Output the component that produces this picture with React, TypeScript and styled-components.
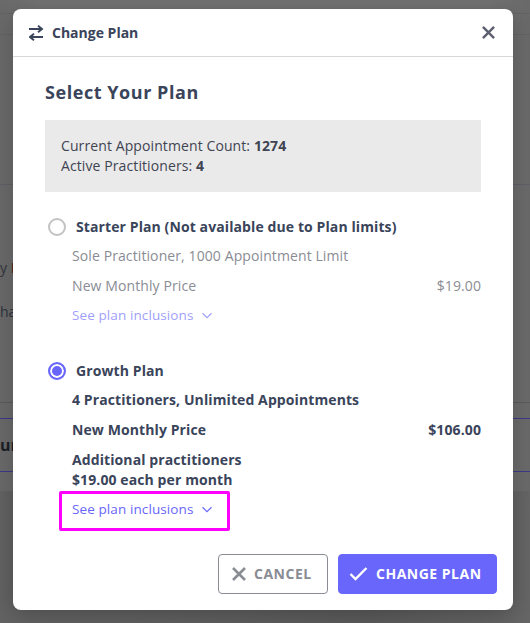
import styled, { createGlobalStyle } from "styled-components";

const GlobalStyle = createGlobalStyle`
  html, body {
    margin: 0;
    padding: 0;
    background: #707070;
  }
  * {
    box-sizing: border-box;
  }
  body {
    font-family: "Open Sans", "Liberation Sans", sans-serif;
  }
`;

const Page = styled.div`
  position: relative;
  width: 530px;
  height: 623px;
  overflow: hidden;
  background: linear-gradient(90deg, #6a6a6a 0, #757575 8%, #757575 92%, #6a6a6a 100%);
`;

/* what shows behind the overlay */
const Behind = styled.div`
  display: flex;
  flex-direction: column;
  height: 100%;
`;

const Band = styled.div<{ $h: number; $line?: string }>`
  height: ${(p) => p.$h}px;
  flex: none;
  border-bottom: 1px solid ${(p) => p.$line ?? "transparent"};
  display: flex;
  align-items: center;
`;

const Dim = styled.div`
  flex: 1;
  background: linear-gradient(90deg, #636363 0, #606060 40%, #5c5c5c 70%, #666 100%);
`;

const BehindText = styled.span<{ $color: string; $size?: number; $weight?: number }>`
  font-size: ${(p) => p.$size ?? 14}px;
  font-weight: ${(p) => p.$weight ?? 400};
  color: ${(p) => p.$color};
  white-space: pre;
`;

const Modal = styled.div`
  position: absolute;
  top: 9px;
  left: 13px;
  width: 500px;
  height: 601px;
  background: #fff;
  border-radius: 8px;
  box-shadow: 0 4px 24px rgba(0, 0, 0, 0.25);
  display: flex;
  flex-direction: column;
`;

const Header = styled.div`
  height: 48px;
  flex: none;
  border-bottom: 1px solid #d8d8d8;
  display: flex;
  align-items: center;
  padding: 0 18px 0 16px;
  gap: 7px;
  color: #3a445a;
`;

const HeaderTitle = styled.div`
  flex: 1;
  font-size: 14px;
  font-weight: 700;
`;

const CloseButton = styled.button`
  border: 0;
  background: none;
  padding: 0;
  display: flex;
  color: #5c5f6e;
`;

const Body = styled.div`
  flex: 1;
  padding: 23px 32px 0;
  color: #3a445a;
`;

const Title = styled.h2`
  margin: 0 0 16px;
  height: 24px;
  line-height: 24px;
  font-size: 18px;
  font-weight: 700;
  letter-spacing: 0.55px;
`;

const InfoBox = styled.div`
  background: #eaeaea;
  padding: 16px;
  font-size: 14px;
  line-height: 20px;
  letter-spacing: 0.1px;
  color: #3f4452;

  b {
    font-weight: 700;
  }
`;

const Plan = styled.div<{ $disabled?: boolean }>`
  margin-top: ${(p) => (p.$disabled ? 24 : 35)}px;
  display: flex;
  flex-direction: column;
  color: ${(p) => (p.$disabled ? "#8a8c94" : "#3a445a")};
  font-weight: ${(p) => (p.$disabled ? 400 : 700)};
  font-size: 14px;
  letter-spacing: 0.1px;
`;

const PlanHead = styled.div`
  display: flex;
  align-items: center;
  height: 20px;
  margin-left: 3px;
  gap: 10px;
  font-size: 14px;
  font-weight: 700;
  color: #3a445a;
`;

const Radio = styled.span<{ $checked?: boolean }>`
  width: 18px;
  height: 18px;
  margin-top: 2px;
  border-radius: 50%;
  flex: none;
  border: 2px solid ${(p) => (p.$checked ? "#6966fb" : "#c2c2c2")};
  background: ${(p) => (p.$checked ? "#6966fb" : "#fff")};
  box-shadow: ${(p) => (p.$checked ? "inset 0 0 0 2px #fff" : "none")};
`;

const Line = styled.div`
  margin: 10px 0 0 27px;
  line-height: 20px;
  display: flex;
  justify-content: space-between;
`;

const Extra = styled.div`
  margin: 10px 0 0 27px;
  line-height: 20px;
`;

const Inclusions = styled.a<{ $muted?: boolean; $marked?: boolean }>`
  position: relative;
  display: flex;
  align-items: center;
  align-self: flex-start;
  gap: 9px;
  height: 20px;
  margin: 9px 0 0 27px;
  font-size: 13.5px;
  font-weight: 400;
  color: ${(p) => (p.$muted ? "#a09ffc" : "#6966fb")};

  ${(p) =>
    p.$marked &&
    `&::after {
      content: "";
      position: absolute;
      top: -8px;
      bottom: -12px;
      left: -13px;
      right: -18px;
      border: 3px solid #ff00ff;
      border-radius: 2px;
    }`}
`;

const Footer = styled.div`
  display: flex;
  justify-content: flex-end;
  gap: 10px;
  padding: 0 16px 16px;
`;

const Button = styled.button<{ $primary?: boolean }>`
  height: 40px;
  width: ${(p) => (p.$primary ? 159 : 110)}px;
  padding: 0 0 1px ${(p) => (p.$primary ? 10 : 13)}px;
  border-radius: 4px;
  border: 1px solid ${(p) => (p.$primary ? "#6966fb" : "#8a8c94")};
  background: ${(p) => (p.$primary ? "#6966fb" : "#fff")};
  color: ${(p) => (p.$primary ? "#fff" : "#8a8c94")};
  font-family: inherit;
  font-size: 14px;
  font-weight: 700;
  letter-spacing: 0.5px;
  display: flex;
  align-items: center;
  gap: 8px;
`;

const Chevron = () => (
  <svg width="10" height="7" viewBox="0 0 10 7" fill="none" stroke="currentColor" strokeWidth="1.2">
    <path d="M0.5 1.25 L5 5.75 L9.5 1.25" />
  </svg>
);

const Cross = ({ size }: { size: number }) => (
  <svg width={size} height={size} viewBox="0 0 14 14" fill="none" stroke="currentColor" strokeWidth="2.6">
    <path d="M1 1 L13 13 M13 1 L1 13" />
  </svg>
);

const SwapIcon = () => (
  <svg width="16" height="16" viewBox="0 0 16 16" fill="none" stroke="currentColor" strokeWidth="1.9">
    <path d="M0 4 H13.5 M9 0.7 L13 4 L9 7.3" />
    <path d="M14 12 H1 M5 8.7 L1 12 L5 15.3" />
  </svg>
);

const Check = () => (
  <svg width="19" height="15" viewBox="0 0 19 15" fill="none" stroke="currentColor" strokeWidth="2.4">
    <path d="M1.5 8 L6.5 13 L17.5 2" />
  </svg>
);

export default function App() {
  return (
    <Page>
      <GlobalStyle />
      <Behind>
        <Band $h={14} $line="#656565" />
        <Band $h={21} $line="#656565" />
        <Band $h={150} $line="#5f6368" />
        <Band $h={73} />
        <Band $h={20}>
          <BehindText $color="#33353d">y </BehindText>
          <BehindText $color="#4a2418">I</BehindText>
        </Band>
        <Band $h={24} />
        <Band $h={20}>
          <BehindText $color="#2f3440">ha</BehindText>
        </Band>
        <Band $h={81} $line="#5c5c5c" />
        <Band $h={16} $line="#3d3a8c" />
        <Band $h={53} $line="#3d3a8c">
          <BehindText $color="#1d1f28" $size={16} $weight={700}>
            ur
          </BehindText>
        </Band>
        <Band $h={19} />
        <Dim />
      </Behind>

      <Modal>
        <Header>
          <SwapIcon />
          <HeaderTitle>Change Plan</HeaderTitle>
          <CloseButton>
            <Cross size={13} />
          </CloseButton>
        </Header>

        <Body>
          <Title>Select Your Plan</Title>
          <InfoBox>
            Current Appointment Count: <b>1274</b>
            <br />
            Active Practitioners: <b>4</b>
          </InfoBox>

          <Plan $disabled>
            <PlanHead>
              <Radio />
              Starter Plan (Not available due to Plan limits)
            </PlanHead>
            <Line>Sole Practitioner, 1000 Appointment Limit</Line>
            <Line>
              <span>New Monthly Price</span>
              <span>$19.00</span>
            </Line>
            <Inclusions $muted>
              See plan inclusions <Chevron />
            </Inclusions>
          </Plan>

          <Plan>
            <PlanHead>
              <Radio $checked />
              Growth Plan
            </PlanHead>
            <Line>4 Practitioners, Unlimited Appointments</Line>
            <Line>
              <span>New Monthly Price</span>
              <span>$106.00</span>
            </Line>
            <Extra>
              Additional practitioners
              <br />
              $19.00 each per month
            </Extra>
            <Inclusions $marked>
              See plan inclusions <Chevron />
            </Inclusions>
          </Plan>
        </Body>

        <Footer>
          <Button>
            <Cross size={14} />
            CANCEL
          </Button>
          <Button $primary>
            <Check />
            CHANGE PLAN
          </Button>
        </Footer>
      </Modal>
    </Page>
  );
}
